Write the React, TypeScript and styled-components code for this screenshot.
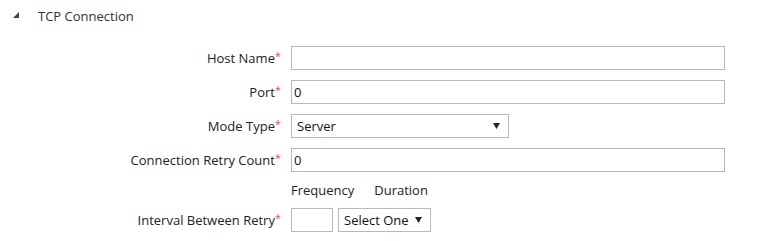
import styled, { createGlobalStyle } from "styled-components";

const GlobalStyle = createGlobalStyle`
    body {
        margin: 0;
        background: #ffffff;
        font-family: "Open Sans", "Noto Sans", sans-serif;
        font-size: 13px;
        color: #333333;
    }
`;

const arrow = (w: number, h: number) =>
    `url("data:image/svg+xml;utf8,<svg xmlns='http://www.w3.org/2000/svg' width='${w}' height='${h}'><polygon points='0,0 ${w},0 ${w / 2},${h}' fill='%23222'/></svg>")`;

const Section = styled.div`
    width: 758px;
`;

const Header = styled.div`
    display: flex;
    align-items: center;
    height: 32px;
    padding-left: 13px;
    gap: 19px;
    color: #333333;
`;

const Toggle = styled.svg`
    width: 6px;
    height: 6px;
    margin-top: -3px;
`;

const Form = styled.div`
    display: grid;
    grid-template-columns: 281px 434px;
    grid-template-rows: repeat(4, 24px) 16px 24px;
    column-gap: 10px;
    row-gap: 10px;
    margin-top: 14px;
    align-items: center;
`;

const Label = styled.label`
    text-align: right;
    white-space: nowrap;
    color: #222222;
`;

const Star = styled.span`
    color: #e8457a;
    font-size: 11px;
    vertical-align: top;
    position: relative;
    top: -1px;
`;

const TextInput = styled.input<{ $width?: number }>`
    box-sizing: border-box;
    width: ${(p) => (p.$width ? `${p.$width}px` : "100%")};
    height: 24px;
    border: 1px solid #b8b8b8;
    border-radius: 0;
    padding: 0 2px;
    font: inherit;
    color: #111111;
    background: #ffffff;
    outline: none;
    display: block;
`;

const Select = styled.select<{ $width: number }>`
    box-sizing: border-box;
    width: ${(p) => p.$width}px;
    height: 24px;
    border: 1px solid #b8b8b8;
    border-radius: 0;
    padding: 0 20px 0 5px;
    font: inherit;
    color: #111111;
    appearance: none;
    background: #ffffff ${arrow(7, 6)} no-repeat right 8px center;
    outline: none;
    display: block;
`;

const SubHeads = styled.div`
    display: flex;
    gap: 20px;
    color: #222222;
    height: 16px;
    align-items: center;
`;

const Pair = styled.div`
    display: flex;
    gap: 5px;
`;

const Spacer = styled.div``;

function Field(props: { label: string; children: React.ReactNode }) {
    return (
        <>
            <Label>
                {props.label}
                <Star>*</Star>
            </Label>
            <div>{props.children}</div>
        </>
    );
}

export default function App() {
    return (
        <>
            <GlobalStyle />
            <Section>
                <Header>
                    <Toggle viewBox="0 0 6 6">
                        <polygon points="6,0 6,6 0,6" fill="#444" />
                    </Toggle>
                    <span>TCP Connection</span>
                </Header>
                <Form>
                    <Field label="Host Name">
                        <TextInput defaultValue="" />
                    </Field>
                    <Field label="Port">
                        <TextInput defaultValue="0" />
                    </Field>
                    <Field label="Mode Type">
                        <Select $width={218} defaultValue="Server">
                            <option>Server</option>
                            <option>Client</option>
                        </Select>
                    </Field>
                    <Field label="Connection Retry Count">
                        <TextInput defaultValue="0" />
                    </Field>
                    <Spacer />
                    <SubHeads>
                        <span>Frequency</span>
                        <span>Duration</span>
                    </SubHeads>
                    <Field label="Interval Between Retry">
                        <Pair>
                            <TextInput $width={42} defaultValue="" />
                            <Select $width={93} defaultValue="Select One">
                                <option>Select One</option>
                                <option>Seconds</option>
                                <option>Minutes</option>
                            </Select>
                        </Pair>
                    </Field>
                </Form>
            </Section>
        </>
    );
}
